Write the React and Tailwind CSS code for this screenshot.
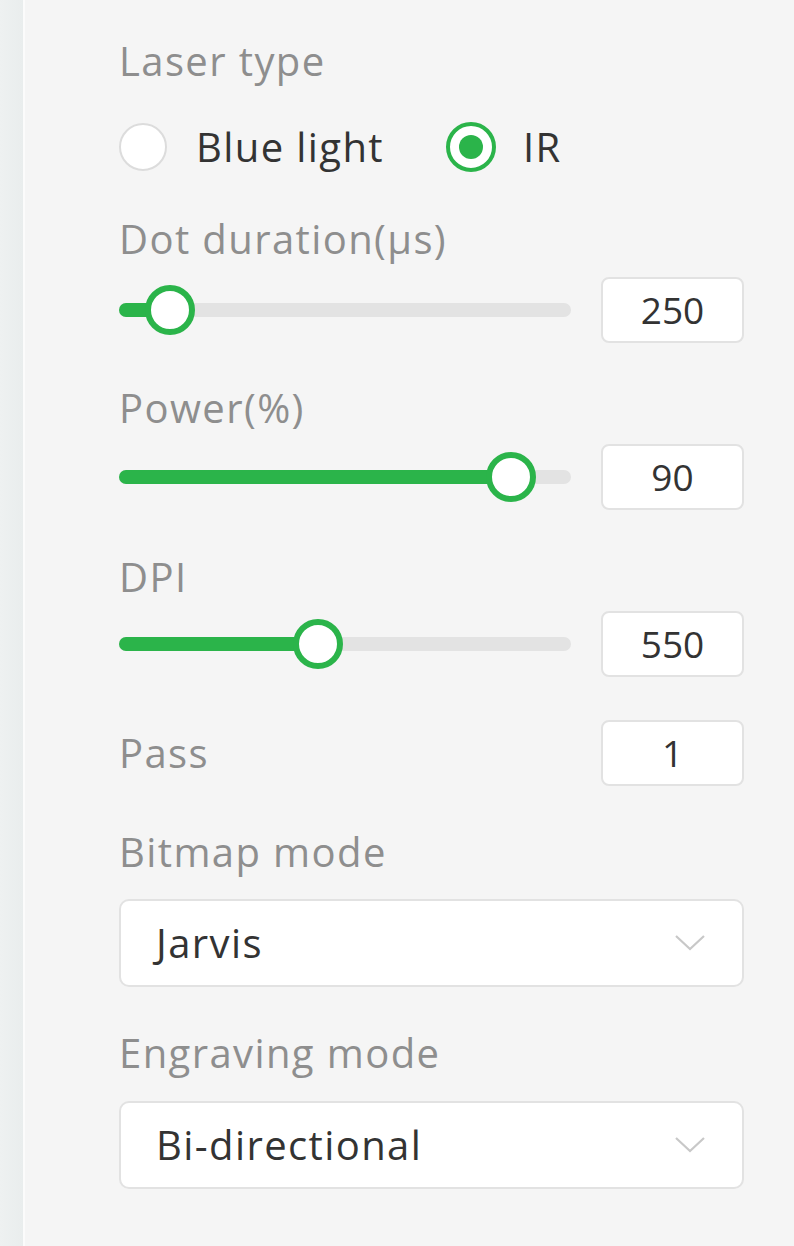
import React from "react";

function Label({ children, className = "" }) {
  return (
    <div className={`h-[52px] leading-[52px] text-[40px] tracking-[1.4px] text-[#8e8e8e] whitespace-nowrap ${className}`}>
      {children}
    </div>
  );
}

function NumBox({ value }) {
  return (
    <div className="w-[143px] h-[66px] shrink-0 rounded-[8px] border-2 border-[#e2e2e2] bg-white flex items-center justify-center text-[37px] text-[#333]">
      {value}
    </div>
  );
}

function Slider({ pct, value, className = "" }) {
  return (
    <div className={`flex items-center h-[66px] ${className}`}>
      <div className="relative w-[452px] h-[14px] rounded-full bg-[#e3e3e3]">
        <div className="absolute left-0 top-0 h-full rounded-full bg-[#2bb44a]" style={{ width: `${pct}px` }} />
        <div
          className="absolute top-1/2 w-[50px] h-[50px] -translate-x-1/2 -translate-y-1/2 rounded-full border-[6px] border-[#2bb44a] bg-white"
          style={{ left: `${pct}px` }}
        />
      </div>
      <div className="ml-auto">
        <NumBox value={value} />
      </div>
    </div>
  );
}

function Select({ value, className = "" }) {
  return (
    <div className={`h-[88px] rounded-[10px] border-2 border-[#e2e2e2] bg-white flex items-center pl-[35px] pr-[36px] ${className}`}>
      <span className="text-[40px] tracking-[1.4px] text-[#333]">{value}</span>
      <svg className="ml-auto" width="32" height="18" viewBox="0 0 32 18" fill="none">
        <path d="M2 2 L16 15 L30 2" stroke="#c8c8c8" strokeWidth="2.2" />
      </svg>
    </div>
  );
}

export default function App() {
  return (
    <div
      className="w-[794px] h-[1246px] flex bg-[#f5f5f5] overflow-hidden"
      style={{ fontFamily: '"Open Sans", "Noto Sans", sans-serif' }}
    >
      <div className="w-[25px] h-full bg-gradient-to-r from-[#eef1f1] to-[#e9eded] border-r-2 border-[#fbfbfb] shrink-0" />
      <div className="flex-1 pl-[94px] pr-[50px] pt-[35px] flex flex-col">
        <Label>Laser type</Label>
        <div className="mt-[32px] h-[56px] flex items-center">
          <div className="w-[48px] h-[48px] rounded-full border-2 border-[#dcdcdc] bg-white" />
          <span className="ml-[29px] text-[40px] tracking-[1.4px] text-[#333]">Blue light</span>
          <div className="ml-[62px] w-[50px] h-[50px] rounded-full border-[4px] border-[#2bb44a] bg-white flex items-center justify-center">
            <div className="w-[24px] h-[24px] rounded-full bg-[#2bb44a]" />
          </div>
          <span className="ml-[27px] text-[40px] tracking-[1.4px] text-[#333]">IR</span>
        </div>
        <Label className="mt-[38px]">Dot duration(µs)</Label>
        <Slider className="mt-[12px]" pct={51} value="250" />
        <Label className="mt-[39px]">Power(%)</Label>
        <Slider className="mt-[10px]" pct={392} value="90" />
        <Label className="mt-[41px]">DPI</Label>
        <Slider className="mt-[8px]" pct={199} value="550" />
        <div className="mt-[43px] h-[66px] flex items-center">
          <span className="text-[40px] tracking-[1.4px] text-[#8e8e8e]">Pass</span>
          <div className="ml-auto">
            <NumBox value="1" />
          </div>
        </div>
        <Label className="mt-[40px]">Bitmap mode</Label>
        <Select className="mt-[21px]" value="Jarvis" />
        <Label className="mt-[40px]">Engraving mode</Label>
        <Select className="mt-[22px]" value="Bi-directional" />
      </div>
    </div>
  );
}
